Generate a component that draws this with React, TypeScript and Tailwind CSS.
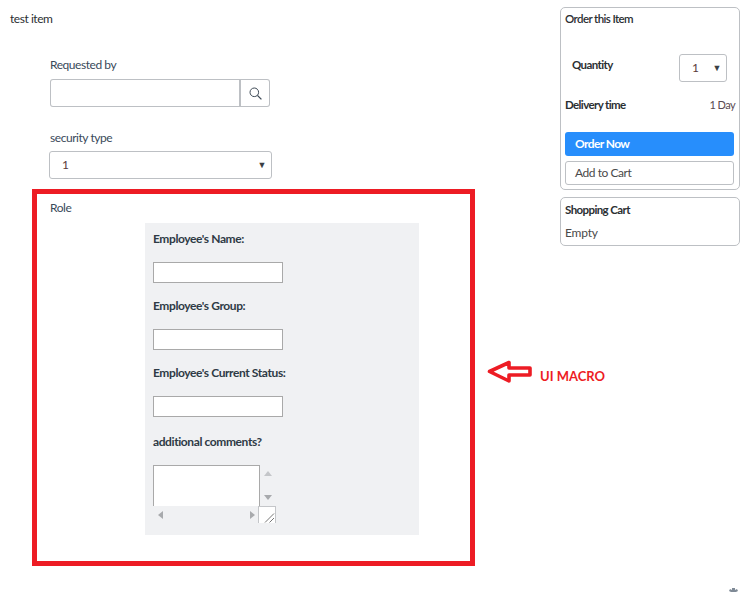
import React from "react";

function MacroField({ label, mt }: { label: string; mt: string }) {
  return (
    <div className={mt}>
      <div className="h-4 text-[12px] leading-4 font-bold tracking-[-0.4px] text-[#2e3a45]">{label}</div>
      <div className="mt-[15px] h-[21px] w-[130px] border border-[#a9a9a9] bg-white" />
    </div>
  );
}

export default function App() {
  return (
    <div className="relative flex h-[592px] w-[743px] overflow-hidden bg-white text-[#2e3a45] font-['Lato',sans-serif] text-[12px] tracking-[-0.45px]">
      <div className="w-[560px] shrink-0">
        <div className="ml-[10px] mt-[11px] h-4 leading-4 text-[12px] text-[#2b2f33]">test item</div>
        <div className="ml-[50px] mt-[30px] h-4 leading-4 text-[#3a4a5a]">Requested by</div>
        <div className="ml-[50px] mt-[6px] flex h-7 w-[220px]">
          <div className="w-[191px] rounded-l-[3px] border border-r-2 border-[#bdc0c4]" />
          <div className="flex w-[29px] items-center justify-center rounded-r-[3px] border border-l-0 border-[#bdc0c4]">
            <svg width="13" height="13" viewBox="0 0 13 13" fill="none" stroke="#3e4a56" strokeWidth="1">
              <circle cx="5.3" cy="5.3" r="4.3" />
              <path d="M8.4 8.4L12.4 12.4" strokeWidth="1.3" />
            </svg>
          </div>
        </div>
        <div className="ml-[50px] mt-[23px] h-4 leading-4 text-[#3a4a5a]">security type</div>
        <div className="ml-[49px] mt-[5px] flex h-7 w-[223px] items-center justify-between rounded-[3px] border border-[#bdc0c4] pl-3 pr-[5px]">
          <span className="text-[#5a3a3a]">1</span>
          <span className="text-[9px] text-[#3a3f45]">▼</span>
        </div>
        <div className="ml-[32px] mt-[10px] h-[377px] w-[443px] border-[5px] border-[#ed1c24] pt-[6px]">
          <div className="ml-[13px] h-4 leading-4 text-[#3a4a5a]">Role</div>
          <div className="ml-[108px] mt-[7px] h-[312px] w-[274px] bg-[#f0f1f3] pl-2 pt-2">
            <MacroField label="Employee's Name:" mt="" />
            <MacroField label="Employee's Group:" mt="mt-[15px]" />
            <MacroField label="Employee's Current Status:" mt="mt-[15px]" />
            <div className="mt-[17px]">
              <div className="h-4 leading-4 font-bold tracking-[-0.4px] text-[#2e3a45]">additional comments?</div>
              <div className="mt-[15px] grid w-[123px] grid-cols-[107px_16px] grid-rows-[41px_17px]">
                <div className="border border-b-0 border-[#a9a9a9] bg-white" />
                <div className="flex flex-col items-center justify-between bg-[#f0f1f3] py-[6px]">
                  <span className="h-0 w-0 border-x-[4px] border-b-[5px] border-x-transparent border-b-[#c4c6c9]" />
                  <span className="h-0 w-0 border-x-[4px] border-t-[5px] border-x-transparent border-t-[#a8aaad]" />
                </div>
                <div className="flex items-center justify-between bg-[#f0f1f3] px-[5px]">
                  <span className="h-0 w-0 border-y-[4px] border-r-[5px] border-y-transparent border-r-[#a8aaad]" />
                  <span className="h-0 w-0 border-y-[4px] border-l-[5px] border-y-transparent border-l-[#a8aaad]" />
                </div>
                <div className="relative -ml-[2px] w-[18px] border-r border-t border-l border-[#c4c6c9] bg-white">
                  <svg className="absolute bottom-0 right-0" width="12" height="12" viewBox="0 0 12 12" stroke="#777" fill="none">
                    <path d="M2 11.5L11 2.5M6.5 11.5L11 7" />
                  </svg>
                </div>
              </div>
            </div>
          </div>
        </div>
      </div>

      <div className="w-[180px] shrink-0 pt-[7px]">
        <div className="h-[183px] rounded-[5px] border border-[#bdc0c4] pl-1 pr-1 pt-[3px]">
          <div className="h-4 text-[11.5px] leading-4 font-semibold tracking-[-0.6px] text-[#2b2f33]">Order this Item</div>
          <div className="mt-[27px] flex h-7 items-center justify-between pl-[7px] pr-[8px]">
            <span className="-mt-[6px] text-[11.5px] font-bold tracking-[-0.6px] text-[#2b2f33]">Quantity</span>
            <div className="flex h-7 w-12 items-center justify-between rounded-[3px] border border-[#bdc0c4] pl-3 pr-[5px]">
              <span className="text-[#5a3a3a]">1</span>
              <span className="text-[9px] text-[#3a3f45]">▼</span>
            </div>
          </div>
          <div className="mt-[15px] flex h-4 items-center justify-between leading-4">
            <span className="text-[11.5px] font-bold tracking-[-0.6px] text-[#2b2f33]">Delivery time</span>
            <span className="text-[11px] tracking-[-0.6px] text-[#5a4a50]">1 Day</span>
          </div>
          <div className="mt-[19px] flex h-6 w-[169px] items-center rounded-[3px] bg-[#278efc] pl-[10px] font-bold tracking-[-0.6px] text-white">Order Now</div>
          <div className="mt-[5px] flex h-6 w-[169px] items-center rounded-[3px] border border-[#bdc0c4] pl-[9px] text-[#4a4a4a]">Add to Cart</div>
        </div>
        <div className="mt-[7px] h-[49px] rounded-[5px] border border-[#bdc0c4] pl-1 pt-[4px]">
          <div className="h-4 text-[11.5px] leading-4 font-bold tracking-[-0.6px] text-[#2b2f33]">Shopping Cart</div>
          <div className="mt-[7px] h-4 leading-4 tracking-[-0.2px] text-[#4a4a4a]">Empty</div>
        </div>
      </div>

      <div className="absolute left-[487px] top-[357px] flex items-center gap-[8px]">
        <svg width="45" height="24" viewBox="0 0 45 24" fill="none" stroke="#ed1c24" strokeWidth="3.6" strokeLinejoin="round">
          <path d="M2.5 11.5L22 2.5V8H43V15H22V21Z" />
        </svg>
        <span className="mt-[10px] text-[13px] font-bold tracking-normal text-[#ed1c24]">UI MACRO</span>
      </div>

      <svg className="absolute left-[727px] top-[587px]" width="13" height="13" viewBox="0 0 13 13" fill="#7f8a96">
        <path d="M5 1h3v2l2-1 1 2-2 1 0 3H4V5L2 4l1-2 2 1z" />
      </svg>
    </div>
  );
}
